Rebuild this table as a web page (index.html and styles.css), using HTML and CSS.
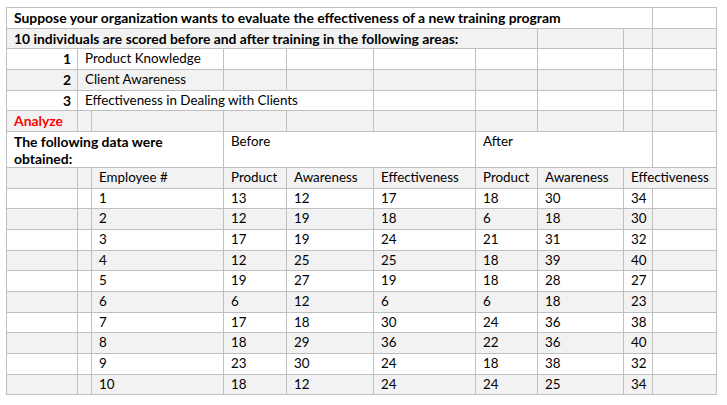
FILE: index.html
```html
<!DOCTYPE html>
<html lang="en">
<head>
<meta charset="utf-8">
<title>Training Program Evaluation</title>
<link rel="stylesheet" href="styles.css">
</head>
<body>
<table class="sheet">
  <colgroup>
    <col class="w1"><col class="w2"><col class="w3"><col class="w4"><col class="w5">
    <col class="w6"><col class="w7"><col class="w8"><col class="w9"><col class="w10">
  </colgroup>
  <tbody>
    <tr>
      <td colspan="9" class="b">Suppose your organization wants to evaluate the effectiveness of a new training program</td>
      <td></td>
    </tr>
    <tr>
      <td colspan="7" class="b">10 individuals are scored before and after training in the following areas:</td>
      <td></td><td></td><td></td>
    </tr>
    <tr>
      <td class="b num">1</td><td colspan="2">Product Knowledge</td><td></td><td></td><td></td><td></td><td></td><td></td><td></td>
    </tr>
    <tr>
      <td class="b num">2</td><td colspan="2">Client Awareness</td><td></td><td></td><td></td><td></td><td></td><td></td><td></td>
    </tr>
    <tr>
      <td class="b num">3</td><td colspan="4">Effectiveness in Dealing with Clients</td><td></td><td></td><td></td><td></td><td></td>
    </tr>
    <tr>
      <td class="b red">Analyze</td><td></td><td></td><td></td><td></td><td></td><td></td><td></td><td></td><td></td>
    </tr>
    <tr class="tall">
      <td colspan="3" class="b">The following data were<br>obtained:</td>
      <td colspan="3">Before</td>
      <td colspan="3">After</td>
      <td></td>
    </tr>
    <tr>
      <td></td><td></td><td>Employee #</td><td>Product</td><td>Awareness</td><td>Effectiveness</td><td>Product</td><td>Awareness</td><td colspan="2">Effectiveness</td>
    </tr>
    <tr><td></td><td></td><td>1</td><td>13</td><td>12</td><td>17</td><td>18</td><td>30</td><td>34</td><td></td></tr>
    <tr><td></td><td></td><td>2</td><td>12</td><td>19</td><td>18</td><td>6</td><td>18</td><td>30</td><td></td></tr>
    <tr><td></td><td></td><td>3</td><td>17</td><td>19</td><td>24</td><td>21</td><td>31</td><td>32</td><td></td></tr>
    <tr><td></td><td></td><td>4</td><td>12</td><td>25</td><td>25</td><td>18</td><td>39</td><td>40</td><td></td></tr>
    <tr><td></td><td></td><td>5</td><td>19</td><td>27</td><td>19</td><td>18</td><td>28</td><td>27</td><td></td></tr>
    <tr><td></td><td></td><td>6</td><td>6</td><td>12</td><td>6</td><td>6</td><td>18</td><td>23</td><td></td></tr>
    <tr><td></td><td></td><td>7</td><td>17</td><td>18</td><td>30</td><td>24</td><td>36</td><td>38</td><td></td></tr>
    <tr><td></td><td></td><td>8</td><td>18</td><td>29</td><td>36</td><td>22</td><td>36</td><td>40</td><td></td></tr>
    <tr><td></td><td></td><td>9</td><td>23</td><td>30</td><td>24</td><td>18</td><td>38</td><td>32</td><td></td></tr>
    <tr><td></td><td></td><td>10</td><td>18</td><td>12</td><td>24</td><td>24</td><td>25</td><td>34</td><td></td></tr>
  </tbody>
</table>
</body>
</html>
```
FILE: styles.css
```css
html, body {
  margin: 0;
  background: #ffffff;
}
body {
  padding: 7px 0 0 6px;
  font-family: Lato, "Open Sans", sans-serif;
  font-size: 13.4px;
  color: #000000;
}
.sheet {
  border-collapse: collapse;
  table-layout: fixed;
  width: 711px;
}
.w1 { width: 71px; }
.w2 { width: 14px; }
.w3 { width: 132px; }
.w4 { width: 63px; }
.w5 { width: 87px; }
.w6 { width: 102px; }
.w7 { width: 62px; }
.w8 { width: 86px; }
.w9 { width: 29px; }
.w10 { width: 64px; }
.sheet tr {
  height: 20.67px;
}
.sheet tr:nth-child(even) {
  background: #f2f2f2;
}
.sheet tr.tall {
  height: 35.33px;
}
.sheet td {
  border: 1px solid #bfbfbf;
  padding: 1px 6px 0 7px;
  line-height: 17px;
  vertical-align: top;
  white-space: nowrap;
  overflow: visible;
}
.b {
  font-weight: 700;
  font-size: 13.9px;
}
.num { text-align: right; }
.red { color: #ff0000; }
```
